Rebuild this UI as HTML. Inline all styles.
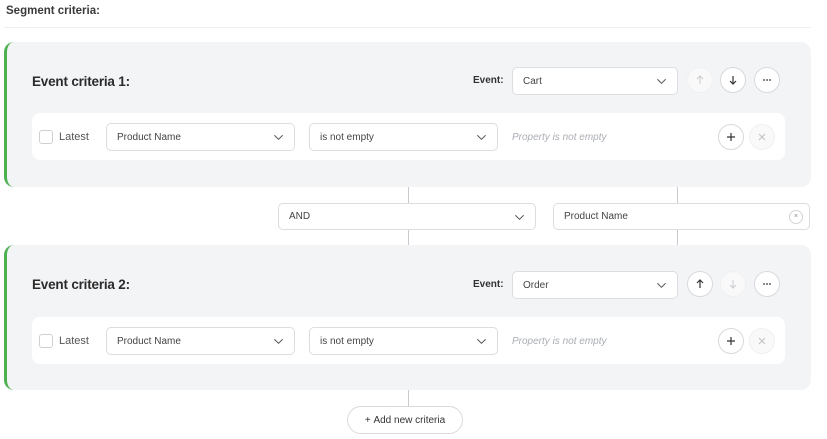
<!DOCTYPE html><html><head><style>
*{box-sizing:border-box;margin:0;padding:0}
body{width:827px;height:439px;background:#fff;font-family:"Liberation Sans",sans-serif;position:relative;overflow:hidden;color:#333}
.a{position:absolute}
.card{position:absolute;left:4px;width:807px;height:145px;background:#f3f4f6;border-radius:10px;border-left:3px solid #4caf50}
.title{position:absolute;font-weight:bold;font-size:13.5px;color:#2b2b2b;letter-spacing:-0.2px}
.sel{position:absolute;background:#fff;border:1px solid #dcdde0;border-radius:5px;font-size:10px;color:#444;padding-left:10px;display:flex;align-items:center}
.sel svg{position:absolute;right:10px;top:50%;margin-top:-3px}
.row{position:absolute;left:32px;width:753px;height:47px;background:#fff;border-radius:8px}
.circ{position:absolute;width:26px;height:26px;border-radius:50%;background:#fff;border:1px solid #d8d9dc;display:flex;align-items:center;justify-content:center}
.circ.dis{border-color:#eef0f2;background:#f9f9fa}
.line{position:absolute;width:1px;background:#c9cacd}
.chk{position:absolute;width:14px;height:14px;border:1px solid #cfd0d3;border-radius:3px;background:#fff}
.lbl{position:absolute;font-size:11px;color:#555}
.ph{position:absolute;font-size:10px;color:#a9adb3;font-style:italic}
.ev{position:absolute;font-size:10px;font-weight:bold;color:#333}
</style></head><body>
<div class="a" style="left:6px;top:5px;font-size:11.5px;font-weight:bold;color:#3a3a3a">Segment criteria:</div>
<div class="a" style="left:4px;top:27px;width:807px;height:1px;background:#eeeff1"></div>

<svg width="0" height="0" style="position:absolute"><defs>
<symbol id="chev" viewBox="0 0 12 7"><path d="M1.5 1L6 5.5L10.5 1" fill="none" stroke="#555" stroke-width="1.1"/></symbol>
</defs></svg>

<!-- card 1 -->
<div class="card" style="top:42px"></div>
<div class="title" style="left:32px;top:74px">Event criteria 1:</div>
<div class="ev" style="left:473px;top:75px">Event:</div>
<div class="sel" style="left:512px;top:67px;width:166px;height:28px">Cart<svg width="11" height="7"><use href="#chev"/></svg></div>
<div class="circ dis" style="left:687px;top:67px"><svg width="10" height="10"><path d="M5 9V1M2 4L5 1L8 4" fill="none" stroke="#c8cacd" stroke-width="1"/></svg></div>
<div class="circ" style="left:720px;top:67px"><svg width="10" height="10"><path d="M5 1V9M2 6L5 9L8 6" fill="none" stroke="#333" stroke-width="1.2"/></svg></div>
<div class="circ" style="left:754px;top:67px"><svg width="10" height="4"><circle cx="2" cy="2" r=".9" fill="#333"/><circle cx="5" cy="2" r=".9" fill="#333"/><circle cx="8" cy="2" r=".9" fill="#333"/></svg></div>
<div class="row" style="top:113px"></div>
<div class="chk" style="left:39px;top:130px"></div>
<div class="lbl" style="left:59px;top:131px">Latest</div>
<div class="sel" style="left:106px;top:123px;width:189px;height:28px">Product Name<svg width="11" height="7"><use href="#chev"/></svg></div>
<div class="sel" style="left:309px;top:123px;width:189px;height:28px">is not empty<svg width="11" height="7"><use href="#chev"/></svg></div>
<div class="ph" style="left:512px;top:132px">Property is not empty</div>
<div class="circ" style="left:718px;top:124px"><svg width="10" height="10"><path d="M5 1V9M1 5H9" stroke="#333" stroke-width="1.2"/></svg></div>
<div class="circ dis" style="left:749px;top:124px"><svg width="8" height="8"><path d="M1 1L7 7M7 1L1 7" stroke="#c0c0c0" stroke-width="1"/></svg></div>

<!-- connectors -->
<div class="line" style="left:408px;top:187px;height:16px"></div>
<div class="line" style="left:677px;top:187px;height:16px"></div>
<div class="line" style="left:408px;top:230px;height:15px"></div>
<div class="line" style="left:677px;top:230px;height:15px"></div>
<div class="sel" style="left:278px;top:203px;width:258px;height:27px">AND<svg width="11" height="7"><use href="#chev"/></svg></div>
<div class="sel" style="left:553px;top:203px;width:257px;height:27px">Product Name<div style="position:absolute;right:6px;top:6px;width:14px;height:14px;border-radius:50%;border:1px solid #d3d4d7;font-size:7px;color:#888;text-align:center;line-height:12px">×</div></div>

<!-- card 2 -->
<div class="card" style="top:245px"></div>
<div class="title" style="left:32px;top:277px">Event criteria 2:</div>
<div class="ev" style="left:473px;top:279px">Event:</div>
<div class="sel" style="left:512px;top:271px;width:166px;height:28px">Order<svg width="11" height="7"><use href="#chev"/></svg></div>
<div class="circ" style="left:687px;top:271px"><svg width="10" height="10"><path d="M5 9V1M2 4L5 1L8 4" fill="none" stroke="#333" stroke-width="1.2"/></svg></div>
<div class="circ dis" style="left:720px;top:271px"><svg width="10" height="10"><path d="M5 1V9M2 6L5 9L8 6" fill="none" stroke="#c8cacd" stroke-width="1"/></svg></div>
<div class="circ" style="left:754px;top:271px"><svg width="10" height="4"><circle cx="2" cy="2" r=".9" fill="#333"/><circle cx="5" cy="2" r=".9" fill="#333"/><circle cx="8" cy="2" r=".9" fill="#333"/></svg></div>
<div class="row" style="top:317px"></div>
<div class="chk" style="left:39px;top:334px"></div>
<div class="lbl" style="left:59px;top:335px">Latest</div>
<div class="sel" style="left:106px;top:327px;width:189px;height:28px">Product Name<svg width="11" height="7"><use href="#chev"/></svg></div>
<div class="sel" style="left:309px;top:327px;width:189px;height:28px">is not empty<svg width="11" height="7"><use href="#chev"/></svg></div>
<div class="ph" style="left:512px;top:336px">Property is not empty</div>
<div class="circ" style="left:718px;top:328px"><svg width="10" height="10"><path d="M5 1V9M1 5H9" stroke="#333" stroke-width="1.2"/></svg></div>
<div class="circ dis" style="left:749px;top:328px"><svg width="8" height="8"><path d="M1 1L7 7M7 1L1 7" stroke="#c0c0c0" stroke-width="1"/></svg></div>

<div class="line" style="left:408px;top:390px;height:16px"></div>
<div class="a" style="left:347px;top:406px;width:116px;height:28px;border:1px solid #d8d9dc;border-radius:14px;background:#fff;font-size:10px;color:#333;display:flex;align-items:center;justify-content:center">+&nbsp;Add new criteria</div>
</body></html>
